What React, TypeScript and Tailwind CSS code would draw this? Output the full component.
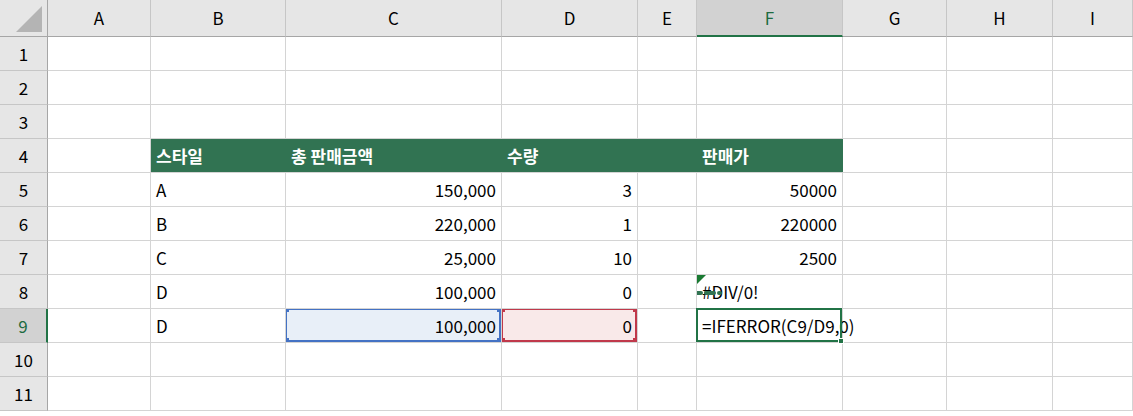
const cols = ["A", "B", "C", "D", "E", "F", "G", "H", "I"];
const widths = [48, 103, 135, 216, 136, 59, 146, 104, 106, 80];

type Cell = { t?: string; right?: boolean; head?: boolean };
const data: Record<number, Cell[]> = {
  4: [{}, { t: "스타일", head: true }, { t: "총 판매금액", head: true }, { t: "수량", head: true }, { head: true }, { t: "판매가", head: true }],
  5: [{}, { t: "A" }, { t: "150,000", right: true }, { t: "3", right: true }, {}, { t: "50000", right: true }],
  6: [{}, { t: "B" }, { t: "220,000", right: true }, { t: "1", right: true }, {}, { t: "220000", right: true }],
  7: [{}, { t: "C" }, { t: "25,000", right: true }, { t: "10", right: true }, {}, { t: "2500", right: true }],
  8: [{}, { t: "D" }, { t: "100,000", right: true }, { t: "0", right: true }, {}, { t: "#DIV/0!" }],
  9: [{}, { t: "D" }, { t: "100,000", right: true }, { t: "0", right: true }, {}, { t: "=IFERROR(C9/D9,0)" }],
};

const Handle = ({ c, pos }: { c: string; pos: string }) => (
  <span className={`absolute w-[6px] h-[6px] ${c} ${pos}`} />
);

export default function App() {
  const font = { fontFamily: '"Noto Sans CJK KR", "Noto Sans", sans-serif' };
  return (
    <div className="w-[1133px] h-[416px] overflow-hidden bg-white text-[17px] text-black" style={font}>
      <div className="grid" style={{ gridTemplateColumns: widths.map((w) => w + "px").join(" ") }}>
        {/* header row */}
        <div className="h-[37px] bg-[#e6e6e6] border-r border-b border-[#a6a6a6] relative">
          <div className="absolute right-[5px] bottom-[4px] w-0 h-0 border-l-[26px] border-l-transparent border-b-[26px] border-b-[#b4b4b4]" />
        </div>
        {cols.map((c) => (
          <div
            key={c}
            className={`h-[37px] flex items-center justify-center border-r border-[#c6c6c6] ${
              c === "F" ? "bg-[#d2d2d2] text-[#1e6b41] border-b-2 border-b-[#217346]" : "bg-[#e6e6e6] border-b border-b-[#a6a6a6]"
            }`}
          >
            {c}
          </div>
        ))}
        {Array.from({ length: 11 }, (_, i) => i + 1).map((r) => (
          <Row key={r} r={r} />
        ))}
      </div>
    </div>
  );
}

function Row({ r }: { r: number }) {
  const cells = data[r] || [];
  return (
    <>
      <div
        className={`h-[34px] flex items-center justify-center border-b border-[#c6c6c6] ${
          r === 9 ? "bg-[#d2d2d2] text-[#1e6b41] border-r-2 border-r-[#217346]" : "bg-[#e6e6e6] border-r border-r-[#a6a6a6]"
        }`}
      >
        {r}
      </div>
      {cols.map((c, ci) => {
        const cell = cells[ci] || {};
        let cls = "border-r border-b border-[#d4d4d4]";
        let bg = "";
        if (cell.head) {
          cls = "border-b border-[#d4d4d4] " + (ci === 5 ? "" : "");
          bg = "bg-[#317352] text-white font-bold";
        }
        if (r === 9 && c === "C") bg = "bg-[#e8eff8]";
        if (r === 9 && c === "D") bg = "bg-[#f9e9e9]";
        return (
          <div
            key={c}
            className={`relative h-[34px] flex items-center px-[5px] whitespace-nowrap ${cls} ${bg} ${
              cell.right ? "justify-end" : ""
            } ${r === 9 && c === "F" ? "overflow-visible z-10" : "overflow-hidden"}`}
          >
            <span className={cell.head ? "pl-[0px]" : ""}>{cell.t}</span>
            {r === 9 && c === "C" && (
              <div className="absolute -left-px -top-px w-[calc(100%+1px)] h-[calc(100%+1px)] border-2 border-[#4472c4]">
                <Handle c="bg-[#4472c4]" pos="-left-[4px] -top-[4px]" />
                <Handle c="bg-[#4472c4]" pos="-right-[4px] -top-[4px]" />
                <Handle c="bg-[#4472c4]" pos="-left-[4px] -bottom-[4px]" />
                <Handle c="bg-[#4472c4]" pos="-right-[4px] -bottom-[4px]" />
              </div>
            )}
            {r === 9 && c === "D" && (
              <div className="absolute -left-px -top-px w-[calc(100%+1px)] h-[calc(100%+1px)] border-2 border-[#c0394b]">
                <Handle c="bg-[#c0394b]" pos="-left-[4px] -top-[4px]" />
                <Handle c="bg-[#c0394b]" pos="-right-[4px] -top-[4px]" />
                <Handle c="bg-[#c0394b]" pos="-left-[4px] -bottom-[4px]" />
                <Handle c="bg-[#c0394b]" pos="-right-[4px] -bottom-[4px]" />
              </div>
            )}
            {r === 9 && c === "F" && (
              <div className="absolute -left-px -top-px w-[calc(100%+1px)] h-[calc(100%+1px)] border-2 border-[#217346] pointer-events-none">
                <span className="absolute -right-[4px] -bottom-[4px] w-[6px] h-[6px] bg-[#217346] border border-white" />
              </div>
            )}
            {r === 8 && c === "F" && (
              <>
                <div className="absolute left-0 top-0 w-0 h-0 border-r-[9px] border-r-transparent border-t-[9px] border-t-[#1a7a32]" />
                <span className="absolute left-[-55px] top-[10px] w-[80px] h-[16px]">
                  <svg width="80" height="16" viewBox="0 0 80 16">
                    <polygon points="0,8 12,0 12,16" fill="#317352" />
                    <line x1="12" y1="8" x2="78" y2="8" stroke="#317352" strokeWidth="4" strokeDasharray="8 5" strokeLinecap="round" />
                  </svg>
                </span>
              </>
            )}
          </div>
        );
      })}
    </>
  );
}
